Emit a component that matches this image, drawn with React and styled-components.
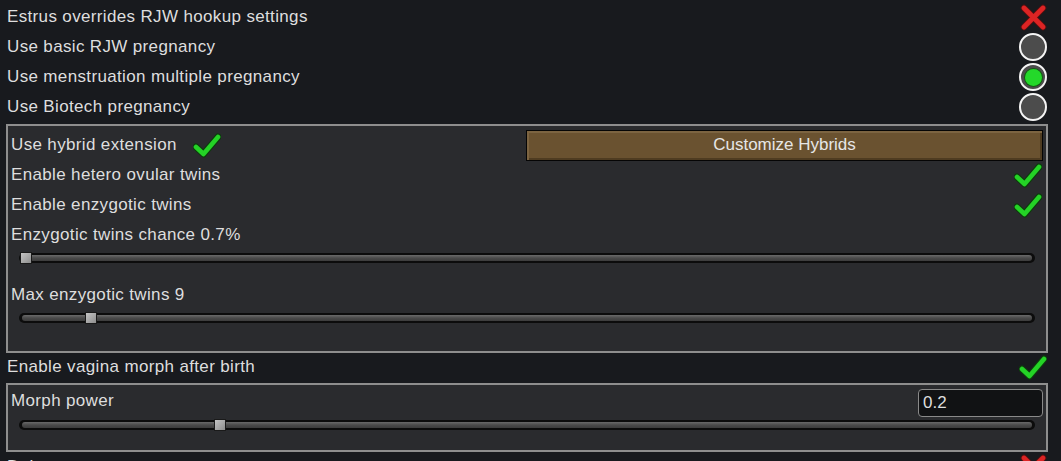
import React from "react";
import styled, { createGlobalStyle } from "styled-components";

const GlobalStyle = createGlobalStyle`
  html, body {
    margin: 0;
    padding: 0;
    background: #181a1e;
    overflow: hidden;
  }
  body {
    font-family: "Liberation Sans", Arial, sans-serif;
    color: #dedede;
  }
`;

const Page = styled.div`
  width: 1042px;
  padding: 2px 13px 0 6px;
`;

const Row = styled.div`
  display: flex;
  align-items: center;
  justify-content: space-between;
  height: ${(p) => p.$h || 30}px;
  margin-bottom: ${(p) => p.$mb || 0}px;
  padding: 0 ${(p) => (p.$inset ? 4 : 1)}px 0 ${(p) => (p.$inset ? 3 : 1)}px;
`;

const Label = styled.span`
  font-size: 17px;
  letter-spacing: 0.35px;
  white-space: nowrap;
  display: flex;
  align-items: center;
  gap: 16px;
`;

const Panel = styled.div`
  border: 2px solid #8e8e8e;
  background: #2a2b2e;
  margin-top: ${(p) => p.$mt || 0}px;
  padding: ${(p) => p.$pt || 4}px 0 ${(p) => p.$pb || 0}px 0;
`;

const Radio = styled.div`
  width: 28px;
  height: 28px;
  box-sizing: border-box;
  border-radius: 50%;
  border: 2.5px solid #f4f4f4;
  background: #4c4c4c;
  display: flex;
  align-items: center;
  justify-content: center;
  &::after {
    content: "";
    display: ${(p) => (p.$on ? "block" : "none")};
    width: 17px;
    height: 17px;
    border-radius: 50%;
    background: #24d82a;
    box-shadow: 0 0 0 1px #145a14;
  }
`;

const HybridButton = styled.div`
  width: 515px;
  height: 29px;
  border: 1px solid #050505;
  background: #6a5230;
  box-shadow: inset 2px 2px 0 #7c6441, inset -2px -2px 0 #4f3c21;
  display: flex;
  align-items: center;
  justify-content: center;
  font-size: 17px;
  color: #e6e6e6;
`;

const SliderWrap = styled.div`
  height: ${(p) => p.$h || 16}px;
  margin: 0 11px ${(p) => p.$mb || 0}px 11px;
  position: relative;
`;

const Track = styled.div`
  position: absolute;
  left: 0;
  right: 0;
  top: 3px;
  height: 10px;
  box-sizing: border-box;
  border-radius: 5px;
  background: #0c0c0c;
  padding: 2px 3px;
  &::after {
    content: "";
    display: block;
    height: 6px;
    border-radius: 3px;
    background: linear-gradient(#6a6a6a, #4a4a4a 50%, #3c3c3c);
  }
`;

const Thumb = styled.div`
  position: absolute;
  top: 2px;
  width: 12px;
  height: 12px;
  box-sizing: border-box;
  border: 1px solid #1a1a1a;
  background: linear-gradient(135deg, #c4c4c4, #8e8e8e);
`;

const NumberBox = styled.div`
  width: 125px;
  height: 28px;
  box-sizing: border-box;
  border: 1px solid #8a8a8a;
  border-radius: 4px;
  background: #111214;
  font-size: 17px;
  padding: 0 4px;
  display: flex;
  align-items: center;
  color: #dedede;
`;

const Check = () => (
  <svg width="28" height="25" viewBox="0 0 28 25">
    <path d="M3 14 L10.5 21 L25 4" fill="none" stroke="#0d3d0d" strokeWidth="7" strokeLinecap="round" strokeLinejoin="round" />
    <path d="M3 14 L10.5 21 L25 4" fill="none" stroke="#24d326" strokeWidth="4.6" strokeLinecap="round" strokeLinejoin="round" />
  </svg>
);

const Cross = () => (
  <svg width="27" height="27" viewBox="0 0 27 27">
    <path d="M4 4 L23 23 M23 4 L4 23" fill="none" stroke="#5a1010" strokeWidth="6.5" strokeLinecap="round" />
    <path d="M4 4 L23 23 M23 4 L4 23" fill="none" stroke="#dc2424" strokeWidth="4.8" strokeLinecap="round" />
  </svg>
);

const Slider = ({ value, h, mb }) => (
  <SliderWrap $h={h} $mb={mb}>
    <Track />
    <Thumb style={{ left: `calc(1px + (100% - 15px) * ${value})` }} />
  </SliderWrap>
);

export default function App() {
  return (
    <>
      <GlobalStyle />
      <Page>
        <Row>
          <Label>Estrus overrides RJW hookup settings</Label>
          <Cross />
        </Row>
        <Row>
          <Label>Use basic RJW pregnancy</Label>
          <Radio />
        </Row>
        <Row>
          <Label>Use menstruation multiple pregnancy</Label>
          <Radio $on />
        </Row>
        <Row>
          <Label>Use Biotech pregnancy</Label>
          <Radio />
        </Row>

        <Panel $mt={2} $pt={4} $pb={25}>
          <Row $inset $h={30} style={{ paddingRight: 3 }}>
            <Label>
              Use hybrid extension <Check />
            </Label>
            <HybridButton>Customize Hybrids</HybridButton>
          </Row>
          <Row $inset>
            <Label>Enable hetero ovular twins</Label>
            <Check />
          </Row>
          <Row $inset>
            <Label>Enable enzygotic twins</Label>
            <Check />
          </Row>
          <Row $inset>
            <Label>Enzygotic twins chance 0.7%</Label>
          </Row>
          <Slider value={0} h={16} mb={14} />
          <Row $inset>
            <Label>Max enzygotic twins 9</Label>
          </Row>
          <Slider value={0.065} h={16} />
        </Panel>

        <Row $h={28} $mb={2}>
          <Label>Enable vagina morph after birth</Label>
          <Check />
        </Row>

        <Panel $pt={4} $pb={17}>
          <Row $inset $h={28} style={{ paddingRight: 3, alignItems: "flex-start" }}>
            <Label style={{ marginTop: 2 }}>Morph power</Label>
            <NumberBox>0.2</NumberBox>
          </Row>
          <Slider value={0.194} h={16} />
        </Panel>

        <Row>
          <Label>Debug</Label>
          <Cross />
        </Row>
      </Page>
    </>
  );
}
